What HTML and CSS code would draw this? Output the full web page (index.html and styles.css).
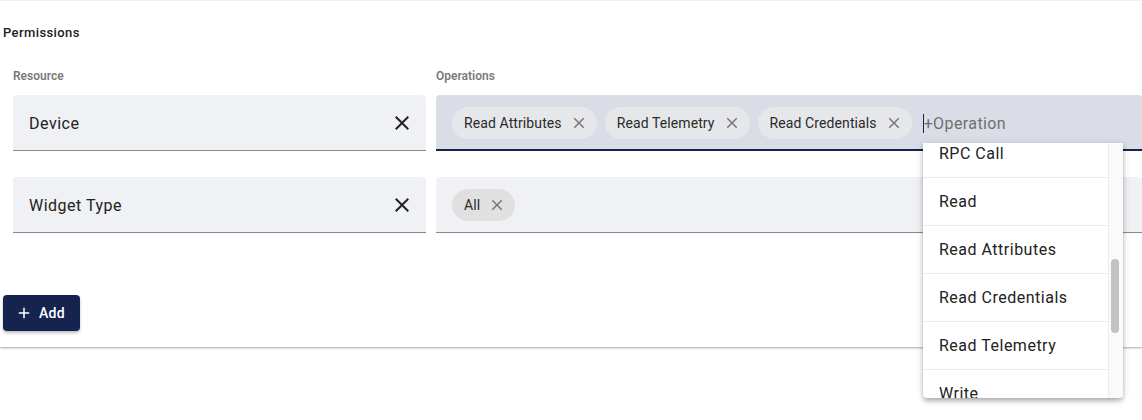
FILE: index.html
```html
<!DOCTYPE html>
<html lang="en">
<head>
    <meta charset="UTF-8">
    <meta name="viewport" content="width=device-width, initial-scale=1.0">
    <title>Permissions</title>
    <link rel="stylesheet" href="styles.css">
</head>
<body>
<div class="card">
  <div class="title">Permissions</div>

  <div class="perm-grid">
    <div class="col-label">Resource</div>
    <div class="col-label">Operations</div>

    <div class="field">
      <span class="field-value">Device</span>
      <svg class="clear-icon" viewBox="0 0 24 24"><path d="M19 6.41 17.59 5 12 10.59 6.41 5 5 6.41 10.59 12 5 17.59 6.41 19 12 13.41 17.59 19 19 17.59 13.41 12z"/></svg>
    </div>
    <div class="field chips-field focused">
      <span class="chip">Read Attributes <svg class="chip-x" viewBox="0 0 24 24"><path d="M19 6.41 17.59 5 12 10.59 6.41 5 5 6.41 10.59 12 5 17.59 6.41 19 12 13.41 17.59 19 19 17.59 13.41 12z"/></svg></span>
      <span class="chip">Read Telemetry <svg class="chip-x" viewBox="0 0 24 24"><path d="M19 6.41 17.59 5 12 10.59 6.41 5 5 6.41 10.59 12 5 17.59 6.41 19 12 13.41 17.59 19 19 17.59 13.41 12z"/></svg></span>
      <span class="chip">Read Credentials <svg class="chip-x" viewBox="0 0 24 24"><path d="M19 6.41 17.59 5 12 10.59 6.41 5 5 6.41 10.59 12 5 17.59 6.41 19 12 13.41 17.59 19 19 17.59 13.41 12z"/></svg></span>
      <span class="op-input"><span class="caret"></span>+Operation</span>

      <div class="dropdown">
        <div class="options">
          <div class="option">RPC Call</div>
          <div class="option">Read</div>
          <div class="option">Read Attributes</div>
          <div class="option">Read Credentials</div>
          <div class="option">Read Telemetry</div>
          <div class="option">Write</div>
        </div>
        <div class="scroll-track"><div class="scroll-thumb"></div></div>
      </div>
    </div>

    <div class="field">
      <span class="field-value">Widget Type</span>
      <svg class="clear-icon" viewBox="0 0 24 24"><path d="M19 6.41 17.59 5 12 10.59 6.41 5 5 6.41 10.59 12 5 17.59 6.41 19 12 13.41 17.59 19 19 17.59 13.41 12z"/></svg>
    </div>
    <div class="field chips-field">
      <span class="chip plain">All <svg class="chip-x" viewBox="0 0 24 24"><path d="M19 6.41 17.59 5 12 10.59 6.41 5 5 6.41 10.59 12 5 17.59 6.41 19 12 13.41 17.59 19 19 17.59 13.41 12z"/></svg></span>
    </div>
  </div>

  <button class="add-btn">
    <svg class="plus" viewBox="0 0 24 24"><path d="M19 13h-6v6h-2v-6H5v-2h6V5h2v6h6z"/></svg>
    Add
  </button>
</div>
</body>
</html>
```

FILE: styles.css
```css
body {
  margin: 0;
  min-height: 420px;
  font-family: Roboto, "Liberation Sans", Arial, sans-serif;
  background: #fff;
}

.card {
  border-top: 1px solid #f0f0f0;
  padding: 24px 0 16px 3px;
  box-shadow: 0 1px 2px rgba(0, 0, 0, 0.35);
}

.title {
  font-size: 13px;
  line-height: 16px;
  font-weight: 500;
  letter-spacing: 0.4px;
  color: #212121;
}

.perm-grid {
  display: grid;
  grid-template-columns: 413px 1fr;
  column-gap: 10px;
  row-gap: 26px;
  padding-left: 10px;
  margin-top: 28px;
}

.col-label {
  font-size: 12px;
  line-height: 14px;
  font-weight: 600;
  color: #7a7a7a;
  margin-bottom: -14px;
}

.field {
  position: relative;
  height: 56px;
  box-sizing: border-box;
  background: #f0f1f5;
  border-radius: 4px 4px 0 0;
  border-bottom: 1px solid #8a8a8a;
  display: flex;
  align-items: center;
  padding: 1px 12px 0 16px;
}

.field-value {
  flex: 1;
  font-size: 16px;
  color: #222;
  letter-spacing: 0.5px;
}

.clear-icon {
  width: 24px;
  height: 24px;
  fill: #222;
}

.chips-field {
  gap: 8px;
  padding-right: 0;
}

.chips-field.focused {
  background: #dadde6;
  border-bottom: 2px solid #14244f;
  padding-top: 2px;
}

.chip {
  display: inline-flex;
  align-items: center;
  gap: 8px;
  height: 32px;
  padding: 0 9px 0 12px;
  border-radius: 16px;
  background: #e6e7eb;
  font-size: 14px;
  letter-spacing: 0.1px;
  color: #2a2a2a;
  white-space: nowrap;
}

.chip.plain {
  background: #e0e0e1;
}

.chip-x {
  width: 18px;
  height: 18px;
  fill: #777;
}

.op-input {
  display: inline-flex;
  align-items: center;
  margin-left: 3px;
  font-size: 16px;
  letter-spacing: 0.4px;
  color: #6f6f6f;
}

.caret {
  width: 1px;
  height: 19px;
  background: #14244f;
}

.dropdown {
  position: absolute;
  left: 487px;
  top: 48px;
  width: 200px;
  height: 255px;
  background: #fff;
  display: flex;
  overflow: hidden;
  border-radius: 0 0 4px 4px;
  box-shadow: 0 2px 4px -1px rgba(0, 0, 0, 0.2), 0 4px 5px 0 rgba(0, 0, 0, 0.14), 0 1px 10px 0 rgba(0, 0, 0, 0.12);
  z-index: 5;
}

.options {
  flex: 1;
  margin-top: -13px;
}

.option {
  height: 48px;
  box-sizing: border-box;
  border-bottom: 1px solid #ebebeb;
  padding-left: 16px;
  display: flex;
  align-items: center;
  font-size: 16px;
  color: #222;
  letter-spacing: 0.5px;
}

.scroll-track {
  width: 14px;
  background: #fafafa;
  border-left: 1px solid #ececec;
  position: relative;
}

.scroll-thumb {
  position: absolute;
  left: 2px;
  top: 116px;
  width: 8px;
  height: 74px;
  border-radius: 4px;
  background: #c2c2c2;
}

.add-btn {
  margin-top: 62px;
  display: flex;
  align-items: center;
  gap: 6px;
  height: 36px;
  width: 77px;
  padding: 0 0 0 12px;
  border: none;
  border-radius: 4px;
  background: #14244f;
  color: #fff;
  font-family: Roboto, "Liberation Sans", Arial, sans-serif;
  font-size: 14px;
  font-weight: 500;
  letter-spacing: 0.3px;
  box-shadow: 0 2px 3px rgba(0, 0, 0, 0.25);
}

.plus {
  width: 18px;
  height: 18px;
  fill: #fff;
}
```
